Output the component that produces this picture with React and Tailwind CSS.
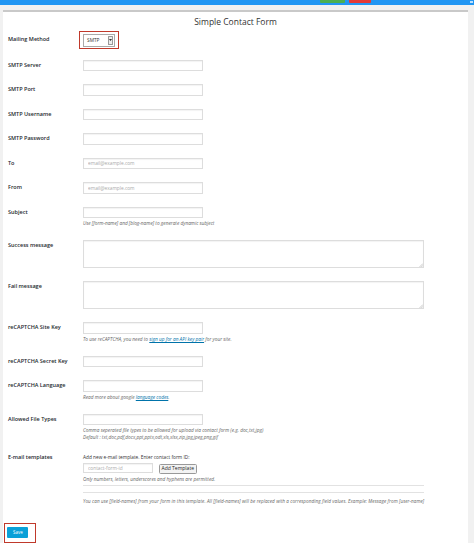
import React from 'react';

const inputCls =
  'h-[11.5px] w-[119.5px] border border-[#dddddd] bg-white px-[4px] text-[4.8px] text-[#333] placeholder:text-[#aaaaaa] shadow-[inset_0_1px_1px_rgba(0,0,0,0.05)] outline-none';
const smallInputCls =
  'h-[10.5px] w-[70px] border border-[#dddddd] bg-white px-[4px] text-[4.8px] text-[#333] placeholder:text-[#aaaaaa] shadow-[inset_0_1px_1px_rgba(0,0,0,0.05)] outline-none';
const helpCls = 'mt-[2px] text-[4.75px] leading-[7px] italic text-[#666] whitespace-nowrap';

const Row = ({ label, children }) => (
  <div className="flex items-start">
    <div className="w-[75px] shrink-0 text-[5.5px] leading-[11px] font-semibold text-[#23282d]">{label}</div>
    <div className="flex flex-col">{children}</div>
  </div>
);

const Area = () => (
  <div className="relative h-[28px] w-[341px]">
    <textarea
      readOnly
      className="block h-full w-full resize-none border border-[#dddddd] bg-white shadow-[inset_0_1px_1px_rgba(0,0,0,0.05)] outline-none"
    />
    <svg className="absolute bottom-[1px] right-[1px]" width="4" height="4" viewBox="0 0 4 4">
      <path d="M4 0.5L0.5 4M4 2.3L2.3 4" stroke="#999" strokeWidth="0.5" />
    </svg>
  </div>
);

const App = () => {
  return (
    <div className="min-h-screen bg-[#f1f1f1] font-['Open_Sans',sans-serif]">
      {/* admin bar */}
      <div className="flex h-[5px] bg-[#2196f3]">
        <div className="ml-[320px] h-[2.7px] w-[25px] rounded-b-[1px] bg-[#4caf50]" />
        <div className="ml-[4px] h-[2.7px] w-[21.5px] rounded-b-[1px] bg-[#e53935]" />
        <div className="ml-auto mr-[1px] mt-[1px] h-[2px] w-[3px] bg-[#bfe0fb]" />
      </div>

      <div className="ml-[3px] mr-[6px] mt-[5px] border-t-2 border-[#c9c9c9] bg-white pb-[10.3px]">
        <div className="mt-[4px] h-[12px] text-center text-[8.5px] leading-[12px] text-[#333]">Simple Contact Form</div>

        <div className="mt-[6.3px] flex flex-col gap-[13px] pl-[5px]">
          <Row label="Mailing Method">
            <div className="relative">
              <div className="flex h-[12.4px] w-[32.3px] items-center justify-between border border-[#aaaaaa] bg-white pl-[3px] pr-[1px]">
                <span className="text-[4.8px] leading-none text-[#333]">SMTP</span>
                <span className="flex h-[9px] w-[5.7px] items-center justify-center rounded-[0.5px] border border-[#999] bg-[#ececec]">
                  <svg width="3" height="2" viewBox="0 0 3 2">
                    <path d="M0 0H3L1.5 2Z" fill="#333" />
                  </svg>
                </span>
              </div>
              <div className="absolute -bottom-[2.6px] -left-[4px] -right-[3.3px] -top-[3.6px] border border-[#c0392b]" />
            </div>
          </Row>

          <Row label="SMTP Server">
            <input readOnly className={inputCls} />
          </Row>
          <Row label="SMTP Port">
            <input readOnly className={inputCls} />
          </Row>
          <Row label="SMTP Username">
            <input readOnly className={inputCls} />
          </Row>
          <Row label="SMTP Password">
            <input readOnly className={inputCls} />
          </Row>
          <Row label="To">
            <input readOnly className={inputCls} placeholder="email@example.com" />
          </Row>
          <Row label="From">
            <input readOnly className={inputCls} placeholder="email@example.com" />
          </Row>
          <Row label="Subject">
            <input readOnly className={inputCls} />
            <p className={helpCls}>Use [form-name] and [blog-name] to generate dynamic subject</p>
          </Row>
          <Row label="Success message">
            <Area />
          </Row>
          <Row label="Fail message">
            <Area />
          </Row>
          <Row label="reCAPTCHA Site Key">
            <input readOnly className={inputCls} />
            <p className={helpCls}>
              To use reCAPTCHA, you need to{' '}
              <span className="text-[#0073aa] underline">sign up for an API key pair</span> for your site.
            </p>
          </Row>
          <Row label="reCAPTCHA Secret Key">
            <input readOnly className={inputCls} />
          </Row>
          <Row label="reCAPTCHA Language">
            <input readOnly className={inputCls} />
            <p className={helpCls}>
              Read more about google <span className="text-[#0073aa] underline">language codes</span>.
            </p>
          </Row>
          <Row label="Allowed File Types">
            <input readOnly className={inputCls} />
            <p className={helpCls}>
              Comma seperated file types to be allowed for upload via contact form (e.g. doc,txt,jpg)
              <br />
              Default : txt,doc,pdf,docx,ppt,pptx,odt,xls,xlsx,zip,jpg,jpeg,png,gif
            </p>
          </Row>
          <div className="flex items-start">
            <div className="w-[75px] shrink-0 text-[5.5px] leading-[7px] font-semibold text-[#23282d]">E-mail templates</div>
            <div className="flex w-[341px] flex-col">
              <p className="text-[4.75px] leading-[7px] text-[#333]">Add new e-mail template. Enter contact form ID:</p>
              <div className="mt-[1px] flex items-center gap-[6px]">
                <input readOnly className={smallInputCls} placeholder="contact-form-id" />
                <button className="mt-[1.5px] h-[10.5px] w-[37.5px] rounded-[1.5px] border border-[#999] bg-[#f3f3f3] text-[5px] font-medium leading-none text-[#222]">
                  Add Template
                </button>
              </div>
              <p className="mt-[1.5px] text-[4.75px] leading-[7px] italic text-[#666]">
                Only numbers, letters, underscores and hyphens are permitted.
              </p>
              <div className="mt-[2.5px] h-px bg-[#e2e2e2]" />
              <div className="mt-[5.4px] h-px bg-[#e2e2e2]" />
              <p className="mt-[5px] text-[4.6px] leading-[7px] tracking-[0.08px] italic text-[#666] whitespace-nowrap">
                You can use [field-names] from your form in this template. All [field-names] will be replaced with a
                corresponding field values. Example: Message from [user-name]
              </p>
            </div>
          </div>
        </div>

        <div className="mt-[11.5px] pl-[4.3px]">
          <div className="relative inline-block">
            <button className="block h-[10.7px] w-[21px] rounded-[1px] bg-[#0aa0d8] text-[4.5px] leading-none text-white">
              Save
            </button>
            <div className="absolute -bottom-[5px] -left-[3px] -right-[7.4px] -top-[4.3px] border border-[#c0392b]" />
          </div>
        </div>
      </div>
    </div>
  );
};

export default App;
